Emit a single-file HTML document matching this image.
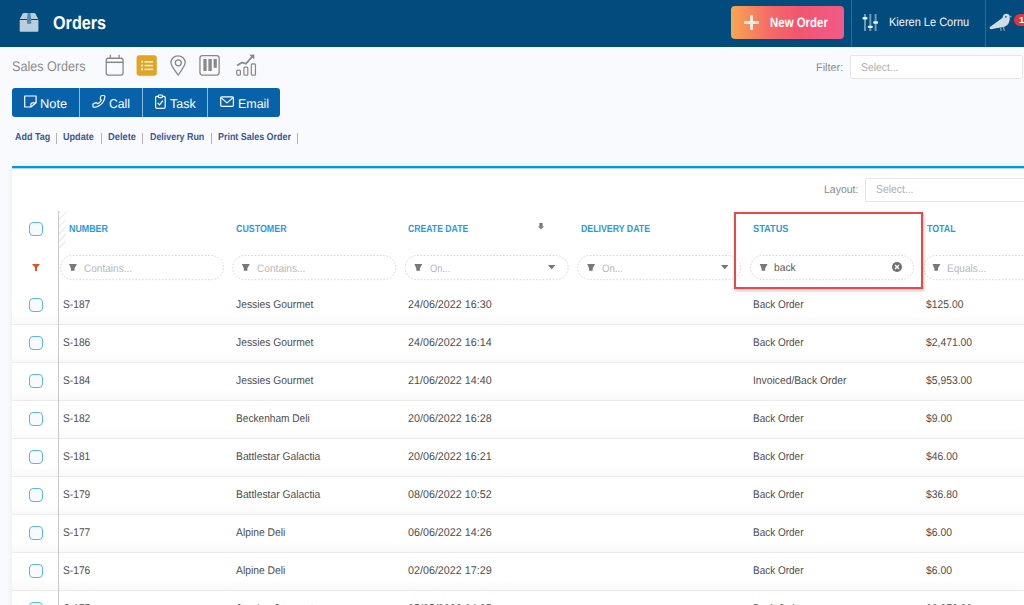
<!DOCTYPE html>
<html><head><meta charset="utf-8">
<style>
*{margin:0;padding:0;box-sizing:border-box}
html,body{width:1024px;height:605px;overflow:hidden;background:#f9fafd;font-family:"Liberation Sans",sans-serif;position:relative}
.a{position:absolute;white-space:nowrap;line-height:1}
.t{position:absolute;white-space:nowrap;line-height:1;transform-origin:0 0;text-rendering:geometricPrecision}
#hdr{position:absolute;left:0;top:0;width:1024px;height:47px;background:#024c7d}
.vsep{position:absolute;top:0;width:1px;height:47px;background:#2a6a9c}
#neworder{position:absolute;left:731px;top:6px;width:113px;height:33px;border-radius:4px;background:linear-gradient(90deg,#f7a650 0%,#f46a68 35%,#f2566e 60%,#f05a88 100%)}
.btns{position:absolute;left:12px;top:88px;width:268px;height:29px;background:#0862aa;border-radius:3px}
.bsep{position:absolute;top:0;width:1px;height:29px;background:#8fbbe0}
.pipe{position:absolute;top:133.2px;width:1.2px;height:10.5px;background:#b4b4b4}
#panel{position:absolute;left:12px;top:166px;width:1030px;height:460px;background:#fff;border-top:2px solid #0097dc;box-shadow:0 0 6px rgba(0,0,0,0.08)}
.pill{position:absolute;top:255px;height:25px;border:1px dashed #e2e2e2;border-radius:13px;background:#fff}
.cb{position:absolute;left:29px;width:14px;height:14px;border:1.5px solid #58b8ea;border-radius:4px;background:#f8faff}
.row{position:absolute;left:12px;width:1020px;height:38px;border-bottom:1px solid #ebebeb;background:linear-gradient(180deg,#fff 0%,#fff 70%,#f9f9f9 100%)}
</style></head><body>
<div id="hdr"></div>
<!-- box icon -->
<svg class="a" style="left:15px;top:8px" width="30" height="28" viewBox="15 8 30 28">
<path d="M23.6 13.1 H34.4 C35 13.1 35.3 13.4 35.6 13.9 L38.2 18.9 H19.8 L22.4 13.9 C22.7 13.4 23 13.1 23.6 13.1 Z" fill="#b9cddd"/>
<path d="M19.7 19.9 H38.4 V30.8 C38.4 31.4 38 31.8 37.4 31.8 H20.7 C20.1 31.8 19.7 31.4 19.7 30.8 Z" fill="#b9cddd"/>
<path d="M27.7 13.1 H30.3 L31.2 18.9 V23.7 H27 V18.9 Z" fill="#4f87b5"/>
</svg>

<div id="neworder"></div>
<div class="a" style="left:744px;top:21px;width:15px;height:3px;background:#fde8dc;border-radius:1px"></div>
<div class="a" style="left:750px;top:15px;width:3px;height:15px;background:#fde8dc;border-radius:1px"></div>
<div class="vsep" style="left:851px"></div>
<!-- sliders -->
<svg class="a" style="left:860px;top:12px" width="20" height="22" viewBox="0 0 20 22">
<rect x="4" y="2" width="2" height="17" fill="#6d98bd"/>
<rect x="9.3" y="2" width="2" height="17" fill="#6d98bd"/>
<rect x="14.6" y="2" width="2" height="17" fill="#6d98bd"/>
<rect x="2.5" y="5" width="5" height="2.4" rx="1" fill="#f0f4f8"/>
<rect x="7.8" y="13.7" width="5" height="2.4" rx="1" fill="#f0f4f8"/>
<rect x="13.1" y="9.3" width="5" height="2.4" rx="1" fill="#f0f4f8"/>
</svg>
<div class="vsep" style="left:985px"></div>
<!-- bird -->
<svg class="a" style="left:986px;top:8px" width="38" height="28" viewBox="0 0 38 28">
<path d="M3.9 20.6 C3.2 19.8 3.6 19.2 4.6 18.6 L16.6 9.8 C16.8 7.3 18.4 5.8 20.3 5.8 C22.3 5.8 23.6 7.1 23.8 8.8 C24 11.5 23.5 14 22.2 16 C20.8 18 18.6 19 16 19.3 C12 19.9 8 20.6 5.2 21.2 C4.6 21.3 4.2 21 3.9 20.6 Z" fill="#cfdce8"/>
<path d="M23.3 7.3 L26 8.5 L23.3 9.9 Z" fill="#8eaac2"/>
<circle cx="19.9" cy="8.7" r="0.95" fill="#3d6a92"/>
<path d="M14.3 19 L15.3 22.8 M17.4 19 L18.4 22.8" stroke="#7e9db8" stroke-width="1.3"/>
</svg>
<div class="a" style="left:1014px;top:14px;width:22px;height:11.5px;background:#e0353f;border-radius:6px"></div>
<div class="a" style="left:1019px;top:15px;color:#fff;font-size:9.5px;font-weight:700">1</div>

<!-- toolbar icons -->
<svg class="a" style="left:100px;top:50px" width="165" height="30" viewBox="100 50 165 30" fill="none" stroke="#8a8886">
<rect x="106.25" y="58.25" width="16.8" height="16.8" rx="2" stroke-width="1.3"/>
<line x1="106.25" y1="62.3" x2="123.05" y2="62.3" stroke-width="1.5"/>
<line x1="110.3" y1="54.8" x2="110.3" y2="58.5" stroke-width="1.3"/>
<line x1="119.1" y1="54.8" x2="119.1" y2="58.5" stroke-width="1.3"/>
<rect x="136.6" y="55.2" width="20.2" height="20.5" rx="2.6" fill="#e1a423" stroke="none"/>
<g fill="#faf0dc" stroke="none">
<rect x="141" y="60.8" width="2" height="1.9"/><rect x="144.5" y="61" width="8.5" height="1.6"/>
<rect x="141" y="64.6" width="2" height="1.9"/><rect x="144.5" y="64.8" width="8.5" height="1.5"/>
<rect x="141" y="68.4" width="2" height="1.9"/><rect x="144.5" y="68.6" width="8.5" height="1.6"/>
</g>
<path d="M178.1 75 C176 72 170.95 66.2 170.95 62.6 C170.95 58.6 174.2 55.85 178.1 55.85 C182 55.85 185.15 58.6 185.15 62.6 C185.15 66.2 180.2 72 178.1 75 Z" stroke-width="1.3"/>
<circle cx="178.3" cy="62.8" r="3" stroke-width="1.3"/>
<rect x="199.95" y="55.55" width="19.2" height="19.5" rx="2.5" stroke-width="1.3"/>
<g fill="#8a8886" stroke="none">
<rect x="203.4" y="59" width="3.2" height="12"/>
<rect x="208.4" y="59" width="3.4" height="12"/>
<rect x="213.6" y="59" width="3.2" height="8.8"/>
</g>
<rect x="236.7" y="70.1" width="3.7" height="5.1" rx="1" stroke-width="1.2"/>
<rect x="243.9" y="67.2" width="3.9" height="8" rx="1" stroke-width="1.2"/>
<rect x="251.35" y="63.9" width="4.1" height="11.3" rx="1" stroke-width="1.2"/>
<path d="M237.1 65.4 L242 62.4 L245.9 63.8 L252.4 56.4" stroke-width="1.8"/>
<path d="M249.3 54.8 L254.4 54.5 L254.2 59.6 Z" fill="#8a8886" stroke="none"/>
</svg>

<div class="a" style="left:850px;top:55px;width:173px;height:24px;background:#fff;border:1px solid #e6e6e6;border-radius:2px"></div>

<!-- action buttons -->
<div class="btns"></div>
<div class="bsep" style="left:79px;top:88px"></div>
<div class="bsep" style="left:142px;top:88px"></div>
<div class="bsep" style="left:207px;top:88px"></div>
<svg class="a" style="left:12px;top:88px" width="268" height="29" viewBox="12 88 268 29" fill="none" stroke="#fff" stroke-width="1.2" stroke-linejoin="round">
<path d="M24.7 96 H36.1 V102.8 L30.9 107 H24.7 Z"/>
<path d="M36 102.8 H32.6 C31.5 102.8 30.9 103.4 30.9 104.5 V107"/>
<g transform="translate(106.2 94.3) scale(-0.6 0.6)"><path stroke-width="2" d="M22 16.92v3a2 2 0 0 1-2.18 2 19.79 19.79 0 0 1-8.63-3.07 19.5 19.5 0 0 1-6-6 19.79 19.79 0 0 1-3.07-8.67A2 2 0 0 1 4.11 2h3a2 2 0 0 1 2 1.72 12.84 12.84 0 0 0 .7 2.81 2 2 0 0 1-.45 2.11L8.09 9.91a16 16 0 0 0 6 6l1.27-1.27a2 2 0 0 1 2.11-.45 12.84 12.84 0 0 0 2.81.7A2 2 0 0 1 22 16.92z"/></g>
<rect x="155.6" y="96.3" width="9.6" height="12" rx="1.2"/>
<rect x="158.4" y="95" width="4" height="2.6" rx="0.8" fill="#0862aa"/>
<path d="M157.6 102.9 L159.5 104.8 L162.9 100.6"/>
<rect x="220.7" y="96.9" width="12.7" height="9.5" rx="1.2"/>
<path d="M221 97.6 L227 102.9 L233 97.6"/>
</svg>

<!-- link pipes -->
<div class="pipe" style="left:56px"></div>
<div class="pipe" style="left:101px"></div>
<div class="pipe" style="left:142px"></div>
<div class="pipe" style="left:211px"></div>
<div class="pipe" style="left:297px"></div>

<!-- panel -->
<div id="panel"></div>
<div class="a" style="left:12px;top:168px;width:1012px;height:1px;background:#aad9f2"></div>
<div class="a" style="left:865px;top:178px;width:170px;height:24px;background:#fff;border:1px solid #e6e6e6;border-radius:2px"></div>

<div class="row" style="top:287px"></div><div class="cb" style="top:298px"></div>
<div class="row" style="top:325px"></div><div class="cb" style="top:336px"></div>
<div class="row" style="top:363px"></div><div class="cb" style="top:374px"></div>
<div class="row" style="top:401px"></div><div class="cb" style="top:412px"></div>
<div class="row" style="top:439px"></div><div class="cb" style="top:450px"></div>
<div class="row" style="top:477px"></div><div class="cb" style="top:488px"></div>
<div class="row" style="top:515px"></div><div class="cb" style="top:526px"></div>
<div class="row" style="top:553px"></div><div class="cb" style="top:564px"></div>
<div class="row" style="top:591px"></div><div class="cb" style="top:602px"></div>

<!-- table vertical divider + hatch -->
<div class="a" style="left:58px;top:211px;width:1px;height:400px;background:#c9c9c9"></div>
<div class="a" style="left:59px;top:211px;width:7px;height:37px;background:repeating-linear-gradient(135deg,#f1f1f1 0 2px,#fff 2px 5px)"></div>

<!-- header checkbox -->
<div class="cb" style="top:222px"></div>
<svg class="a" style="left:538.4px;top:223px" width="6" height="7" viewBox="0 0 6 7"><rect x="1.4" y="0" width="3.2" height="3.4" fill="#777"/><path d="M0 3.3 H6 L3 6.5 Z" fill="#777"/></svg>

<!-- filter row -->
<svg class="a" style="left:32px;top:264px" width="8" height="7" viewBox="0 0 8 7"><path d="M0 0 H8 L5 3.5 V7 H3 V3.5 Z" fill="#e8501e"/></svg>
<svg class="a" style="left:0;top:250px" width="1024" height="35" viewBox="0 250 1024 35">
<g fill="#fff" stroke="#d9d9d9" stroke-width="1" stroke-dasharray="1.7 1.6"><rect x="60.5" y="255.5" width="163" height="24.2" rx="12.1"/><rect x="232.6" y="255.5" width="163" height="24.2" rx="12.1"/><rect x="405.1" y="255.5" width="163" height="24.2" rx="12.1"/><rect x="577.7" y="255.5" width="163" height="24.2" rx="12.1"/><rect x="750.5" y="255.5" width="163" height="24.2" rx="12.1"/><rect x="923.8" y="255.5" width="163" height="24.2" rx="12.1"/></g>
<g fill="#787878"><path d="M69.0 264 H76.89999999999999 L74.5 268.2 V270.85 H70.89999999999999 V268.2 Z"/><path d="M241.89999999999998 264 H249.79999999999998 L247.39999999999998 268.2 V270.85 H243.79999999999998 V268.2 Z"/><path d="M414.4 264 H422.3 L419.9 268.2 V270.85 H416.3 V268.2 Z"/><path d="M587.2 264 H595.1 L592.7 268.2 V270.85 H589.1 V268.2 Z"/><path d="M759.7 264 H767.6 L765.2 268.2 V270.85 H761.6 V268.2 Z"/><path d="M932.5 264 H940.4 L938.0 268.2 V270.85 H934.4 V268.2 Z"/></g>
</svg>
<svg class="a" style="left:548px;top:265px" width="7.4" height="4.4" viewBox="0 0 7.4 4.4"><path d="M0 0 H7.4 L3.7 4.4 Z" fill="#777"/></svg>
<svg class="a" style="left:720.7px;top:265px" width="7.4" height="4.4" viewBox="0 0 7.4 4.4"><path d="M0 0 H7.4 L3.7 4.4 Z" fill="#777"/></svg>
<svg class="a" style="left:892px;top:262px" width="10" height="10" viewBox="0 0 10 10"><circle cx="5" cy="5" r="5" fill="#707070"/><path d="M3 3 L7 7 M7 3 L3 7" stroke="#fff" stroke-width="1.4"/></svg>

<div class="t" style="left:53.10px;top:14px;font-size:18.48px;font-weight:700;transform:scaleX(0.8768);color:#fff">Orders</div>
<div class="t" style="left:770.06px;top:16px;font-size:13.62px;font-weight:700;transform:scaleX(0.8412);color:#fff">New Order</div>
<div class="t" style="left:888.52px;top:16px;font-size:12.17px;font-weight:400;transform:scaleX(0.9052);color:#f4f7fa">Kieren Le Cornu</div>
<div class="t" style="left:11.73px;top:59px;font-size:14.06px;font-weight:400;transform:scaleX(0.8960);color:#8c8c8c">Sales Orders</div>
<div class="t" style="left:815.73px;top:63px;font-size:11.01px;font-weight:400;transform:scaleX(0.9901);color:#8a8a8a">Filter:</div>
<div class="t" style="left:860.53px;top:63px;font-size:11.30px;font-weight:400;transform:scaleX(0.9168);color:#b0b0b0">Select...</div>
<div class="t" style="left:39.97px;top:98px;font-size:12.75px;font-weight:400;transform:scaleX(1.0090);color:#fff">Note</div>
<div class="t" style="left:109.39px;top:98px;font-size:12.75px;font-weight:400;transform:scaleX(0.9578);color:#fff">Call</div>
<div class="t" style="left:169.69px;top:98px;font-size:12.75px;font-weight:400;transform:scaleX(0.9814);color:#fff">Task</div>
<div class="t" style="left:237.60px;top:98px;font-size:12.75px;font-weight:400;transform:scaleX(0.9758);color:#fff">Email</div>
<div class="t" style="left:14.58px;top:133px;font-size:10.14px;font-weight:700;transform:scaleX(0.8846);color:#3a5896">Add Tag</div>
<div class="t" style="left:63.45px;top:133px;font-size:10.14px;font-weight:700;transform:scaleX(0.8979);color:#3a5896">Update</div>
<div class="t" style="left:108.39px;top:133px;font-size:10.14px;font-weight:700;transform:scaleX(0.9182);color:#3a5896">Delete</div>
<div class="t" style="left:150.22px;top:133px;font-size:10.14px;font-weight:700;transform:scaleX(0.8766);color:#3a5896">Delivery Run</div>
<div class="t" style="left:218.17px;top:133px;font-size:10.14px;font-weight:700;transform:scaleX(0.8807);color:#3a5896">Print Sales Order</div>
<div class="t" style="left:823.76px;top:185px;font-size:11.01px;font-weight:400;transform:scaleX(0.9521);color:#8a8a8a">Layout:</div>
<div class="t" style="left:876.03px;top:185px;font-size:11.59px;font-weight:400;transform:scaleX(0.8938);color:#b0b0b0">Select...</div>
<div class="t" style="left:68.92px;top:225px;font-size:10.29px;font-weight:700;transform:scaleX(0.8633);color:#2a9ae0">NUMBER</div>
<div class="t" style="left:235.65px;top:225px;font-size:10.29px;font-weight:700;transform:scaleX(0.8615);color:#2a9ae0">CUSTOMER</div>
<div class="t" style="left:408.15px;top:225px;font-size:10.29px;font-weight:700;transform:scaleX(0.8413);color:#2a9ae0">CREATE DATE</div>
<div class="t" style="left:580.53px;top:225px;font-size:10.29px;font-weight:700;transform:scaleX(0.8530);color:#2a9ae0">DELIVERY DATE</div>
<div class="t" style="left:753.42px;top:225px;font-size:10.29px;font-weight:700;transform:scaleX(0.8961);color:#2a9ae0">STATUS</div>
<div class="t" style="left:926.51px;top:225px;font-size:10.29px;font-weight:700;transform:scaleX(0.8595);color:#2a9ae0">TOTAL</div>
<div class="t" style="left:84.10px;top:264px;font-size:10.87px;font-weight:400;transform:scaleX(0.9259);color:#b8b8b8">Contains...</div>
<div class="t" style="left:256.59px;top:264px;font-size:10.87px;font-weight:400;transform:scaleX(0.9319);color:#b8b8b8">Contains...</div>
<div class="t" style="left:429.58px;top:264px;font-size:10.87px;font-weight:400;transform:scaleX(0.8610);color:#b8b8b8">On...</div>
<div class="t" style="left:602.17px;top:264px;font-size:10.87px;font-weight:400;transform:scaleX(0.8837);color:#b8b8b8">On...</div>
<div class="t" style="left:946.59px;top:264px;font-size:10.87px;font-weight:400;transform:scaleX(0.9299);color:#b8b8b8">Equals...</div>
<div class="t" style="left:774.23px;top:263px;font-size:10.72px;font-weight:400;transform:scaleX(0.9579);color:#5c5c5c">back</div>
<div class="t" style="left:62.64px;top:300px;font-size:11.16px;font-weight:400;transform:scaleX(0.9152);color:#4e4e4e">S-187</div>
<div class="t" style="left:235.95px;top:300px;font-size:11.16px;font-weight:400;transform:scaleX(0.9248);color:#4e4e4e">Jessies Gourmet</div>
<div class="t" style="left:408.06px;top:300px;font-size:11.16px;font-weight:400;transform:scaleX(0.9630);color:#4e4e4e">24/06/2022 16:30</div>
<div class="t" style="left:753.20px;top:300px;font-size:11.16px;font-weight:400;transform:scaleX(0.8943);color:#4e4e4e">Back Order</div>
<div class="t" style="left:926.40px;top:300px;font-size:11.16px;font-weight:400;transform:scaleX(0.9275);color:#4e4e4e">$125.00</div>
<div class="t" style="left:62.64px;top:338px;font-size:11.16px;font-weight:400;transform:scaleX(0.9152);color:#4e4e4e">S-186</div>
<div class="t" style="left:235.95px;top:338px;font-size:11.16px;font-weight:400;transform:scaleX(0.9248);color:#4e4e4e">Jessies Gourmet</div>
<div class="t" style="left:408.06px;top:338px;font-size:11.16px;font-weight:400;transform:scaleX(0.9630);color:#4e4e4e">24/06/2022 16:14</div>
<div class="t" style="left:753.20px;top:338px;font-size:11.16px;font-weight:400;transform:scaleX(0.8943);color:#4e4e4e">Back Order</div>
<div class="t" style="left:926.40px;top:338px;font-size:11.16px;font-weight:400;transform:scaleX(0.9275);color:#4e4e4e">$2,471.00</div>
<div class="t" style="left:62.64px;top:376px;font-size:11.16px;font-weight:400;transform:scaleX(0.9152);color:#4e4e4e">S-184</div>
<div class="t" style="left:235.95px;top:376px;font-size:11.16px;font-weight:400;transform:scaleX(0.9248);color:#4e4e4e">Jessies Gourmet</div>
<div class="t" style="left:408.06px;top:376px;font-size:11.16px;font-weight:400;transform:scaleX(0.9630);color:#4e4e4e">21/06/2022 14:40</div>
<div class="t" style="left:753.07px;top:376px;font-size:11.16px;font-weight:400;transform:scaleX(0.9236);color:#4e4e4e">Invoiced/Back Order</div>
<div class="t" style="left:926.40px;top:376px;font-size:11.16px;font-weight:400;transform:scaleX(0.9275);color:#4e4e4e">$5,953.00</div>
<div class="t" style="left:62.64px;top:414px;font-size:11.16px;font-weight:400;transform:scaleX(0.9152);color:#4e4e4e">S-182</div>
<div class="t" style="left:236.09px;top:414px;font-size:11.16px;font-weight:400;transform:scaleX(0.9080);color:#4e4e4e">Beckenham Deli</div>
<div class="t" style="left:408.06px;top:414px;font-size:11.16px;font-weight:400;transform:scaleX(0.9630);color:#4e4e4e">20/06/2022 16:28</div>
<div class="t" style="left:753.20px;top:414px;font-size:11.16px;font-weight:400;transform:scaleX(0.8943);color:#4e4e4e">Back Order</div>
<div class="t" style="left:926.40px;top:414px;font-size:11.16px;font-weight:400;transform:scaleX(0.9275);color:#4e4e4e">$9.00</div>
<div class="t" style="left:62.64px;top:452px;font-size:11.16px;font-weight:400;transform:scaleX(0.9152);color:#4e4e4e">S-181</div>
<div class="t" style="left:236.07px;top:452px;font-size:11.16px;font-weight:400;transform:scaleX(0.9249);color:#4e4e4e">Battlestar Galactia</div>
<div class="t" style="left:408.06px;top:452px;font-size:11.16px;font-weight:400;transform:scaleX(0.9630);color:#4e4e4e">20/06/2022 16:21</div>
<div class="t" style="left:753.20px;top:452px;font-size:11.16px;font-weight:400;transform:scaleX(0.8943);color:#4e4e4e">Back Order</div>
<div class="t" style="left:926.40px;top:452px;font-size:11.16px;font-weight:400;transform:scaleX(0.9275);color:#4e4e4e">$46.00</div>
<div class="t" style="left:62.64px;top:490px;font-size:11.16px;font-weight:400;transform:scaleX(0.9152);color:#4e4e4e">S-179</div>
<div class="t" style="left:236.07px;top:490px;font-size:11.16px;font-weight:400;transform:scaleX(0.9249);color:#4e4e4e">Battlestar Galactia</div>
<div class="t" style="left:408.17px;top:490px;font-size:11.16px;font-weight:400;transform:scaleX(0.9630);color:#4e4e4e">08/06/2022 10:52</div>
<div class="t" style="left:753.20px;top:490px;font-size:11.16px;font-weight:400;transform:scaleX(0.8943);color:#4e4e4e">Back Order</div>
<div class="t" style="left:926.40px;top:490px;font-size:11.16px;font-weight:400;transform:scaleX(0.9275);color:#4e4e4e">$36.80</div>
<div class="t" style="left:62.64px;top:528px;font-size:11.16px;font-weight:400;transform:scaleX(0.9152);color:#4e4e4e">S-177</div>
<div class="t" style="left:236.05px;top:528px;font-size:11.16px;font-weight:400;transform:scaleX(0.9248);color:#4e4e4e">Alpine Deli</div>
<div class="t" style="left:408.17px;top:528px;font-size:11.16px;font-weight:400;transform:scaleX(0.9630);color:#4e4e4e">06/06/2022 14:26</div>
<div class="t" style="left:753.20px;top:528px;font-size:11.16px;font-weight:400;transform:scaleX(0.8943);color:#4e4e4e">Back Order</div>
<div class="t" style="left:926.40px;top:528px;font-size:11.16px;font-weight:400;transform:scaleX(0.9275);color:#4e4e4e">$6.00</div>
<div class="t" style="left:62.64px;top:566px;font-size:11.16px;font-weight:400;transform:scaleX(0.9152);color:#4e4e4e">S-176</div>
<div class="t" style="left:236.05px;top:566px;font-size:11.16px;font-weight:400;transform:scaleX(0.9248);color:#4e4e4e">Alpine Deli</div>
<div class="t" style="left:408.17px;top:566px;font-size:11.16px;font-weight:400;transform:scaleX(0.9630);color:#4e4e4e">02/06/2022 17:29</div>
<div class="t" style="left:753.20px;top:566px;font-size:11.16px;font-weight:400;transform:scaleX(0.8943);color:#4e4e4e">Back Order</div>
<div class="t" style="left:926.40px;top:566px;font-size:11.16px;font-weight:400;transform:scaleX(0.9275);color:#4e4e4e">$6.00</div>
<div class="t" style="left:62.64px;top:604px;font-size:11.16px;font-weight:400;transform:scaleX(0.9152);color:#4e4e4e">S-175</div>
<div class="t" style="left:235.95px;top:604px;font-size:11.16px;font-weight:400;transform:scaleX(0.9248);color:#4e4e4e">Jessies Gourmet</div>
<div class="t" style="left:408.17px;top:604px;font-size:11.16px;font-weight:400;transform:scaleX(0.9630);color:#4e4e4e">05/05/2022 14:05</div>
<div class="t" style="left:753.20px;top:604px;font-size:11.16px;font-weight:400;transform:scaleX(0.8943);color:#4e4e4e">Back Order</div>
<div class="t" style="left:926.40px;top:604px;font-size:11.16px;font-weight:400;transform:scaleX(0.9275);color:#4e4e4e">$2,970.00</div>

<!-- red highlight box -->
<div class="a" style="left:734px;top:212px;width:189px;height:77px;border:2px solid #e94848;box-shadow:1px 2px 3px rgba(0,0,0,0.22)"></div>

</body></html>
